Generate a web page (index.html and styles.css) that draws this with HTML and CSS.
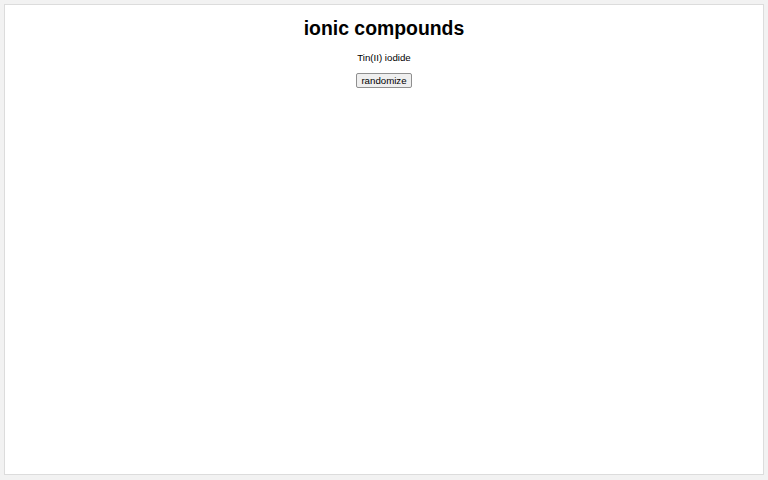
FILE: index.html
```html
<!DOCTYPE html>
<html>
<head>
<meta charset="utf-8">
<link rel="stylesheet" href="styles.css">
</head>
<body>
<div class="panel">
  <h1 class="title">ionic compounds</h1>
  <p class="name">Tin(II) iodide</p>
  <button class="btn">randomize</button>
</div>
</body>
</html>
```
FILE: styles.css
```css
html, body { margin: 0; padding: 0; }
body {
  background: #f2f2f2;
  font-family: "Liberation Sans", Arial, sans-serif;
  padding: 4px 4px 5px 4px;
  height: 480px;
  box-sizing: border-box;
}
.panel {
  background: #fff;
  border: 1px solid #dcdcdc;
  height: 471px;
  box-sizing: border-box;
  display: flex;
  flex-direction: column;
  align-items: center;
}
.title {
  margin: 12px 0 0;
  font-size: 19.4px;
  font-weight: bold;
  line-height: 23px;
  color: #000;
}
.name {
  margin: 12px 0 0;
  font-size: 9.7px;
  line-height: 12px;
  color: #000;
}
.btn {
  margin-top: 9px;
  font-family: "Liberation Sans", Arial, sans-serif;
  font-size: 9.7px;
  line-height: 12px;
  padding: 0 4px;
  height: 15px;
  background: #efefef;
  border: 1px solid #8f8f8f;
  border-radius: 2px;
  color: #000;
}
```
